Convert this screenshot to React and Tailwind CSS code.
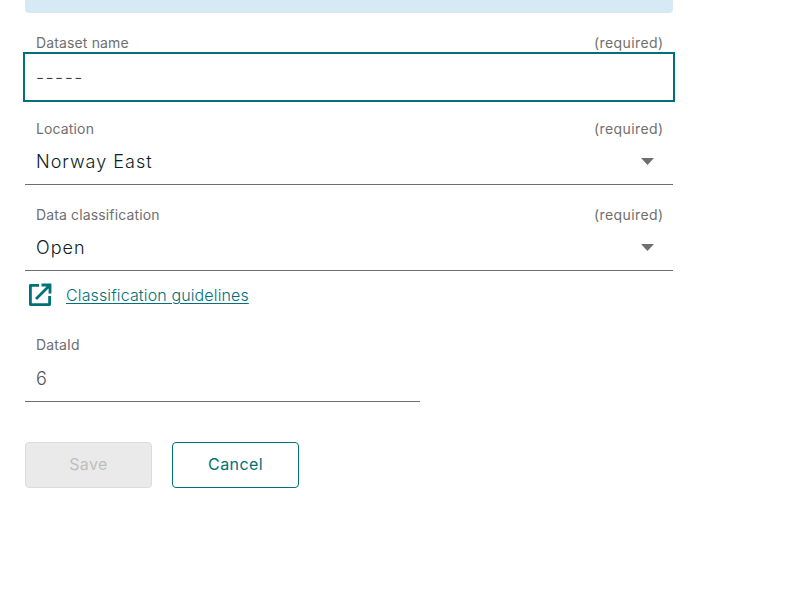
function LabelRow({ label, required }) {
  return (
    <div className="flex h-4 items-center justify-between pl-[11px] pr-[9.5px] text-[14px] leading-4 tracking-[0.14px] text-[#6f6f6f]">
      <span>{label}</span>
      {required && <span className="tracking-[0.4px]">(required)</span>}
    </div>
  );
}

function SelectField({ label, value }) {
  return (
    <div>
      <LabelRow label={label} required />
      <div className="flex h-12 items-center justify-between border-b border-[#6f6f6f] pl-[11px] pr-[19px] pt-[2px] text-[18px] font-light tracking-[1px] text-[#0c1c28]">
        <span>{value}</span>
        <svg width="13" height="7" viewBox="0 0 13 7" className="fill-[#6f6f6f]">
          <path d="M0 0h13L6.5 7z" />
        </svg>
      </div>
    </div>
  );
}

export default function App() {
  return (
    <div className="h-[596px] w-[788px] overflow-hidden bg-white font-['Inter',sans-serif]">
      <div className="ml-[25px] flex w-[648px] flex-col">
        <div className="h-[13px] rounded-b-[4px] bg-[#d5eaf4]" />
        <div className="mt-[22px]">
          <LabelRow label="Dataset name" required />
          <div className="mt-[3px] flex h-[46px] items-center px-[11px] text-[18px] font-light tracking-[1.4px] text-[#3d3d3d] outline-2 outline-[#007079]">
            -----
          </div>
        </div>
        <div className="mt-[21px] flex flex-col gap-[22px]">
          <SelectField label="Location" value="Norway East" />
          <SelectField label="Data classification" value="Open" />
        </div>
        <div className="mt-[12px] flex items-center gap-[14px] pl-[3px] text-[16px] font-light tracking-[0.13px] text-[#007079]">
          <svg width="24" height="24" viewBox="0 0 24 24" fill="none" stroke="#007079" strokeWidth="2.8" strokeLinejoin="round">
            <path d="M11 2.4H2.4v19.2h19.2V13" />
            <path d="M8 16 21 3M13.5 2h8.5v8.5" strokeLinejoin="miter" />
          </svg>
          <a href="#" className="underline underline-offset-2">Classification guidelines</a>
        </div>
        <div className="mt-[30px] w-[395px]">
          <LabelRow label="DataId" />
          <div className="flex h-[49px] items-center border-b border-[#6f6f6f] px-[11px] pt-[2px] text-[18px] font-light text-[#555555]">6</div>
        </div>
        <div className="mt-[40px] flex gap-5">
          <button className="h-[46px] w-[127px] rounded-[4px] border border-[#dcdcdc] bg-[#eaeaea] pb-[2px] text-[16px] tracking-[0.4px] text-[#bebebe]">Save</button>
          <button className="h-[46px] w-[127px] rounded-[4px] border border-[#007079] bg-white pb-[2px] text-[16px] tracking-[0.4px] text-[#007079]">Cancel</button>
        </div>
      </div>
    </div>
  );
}
